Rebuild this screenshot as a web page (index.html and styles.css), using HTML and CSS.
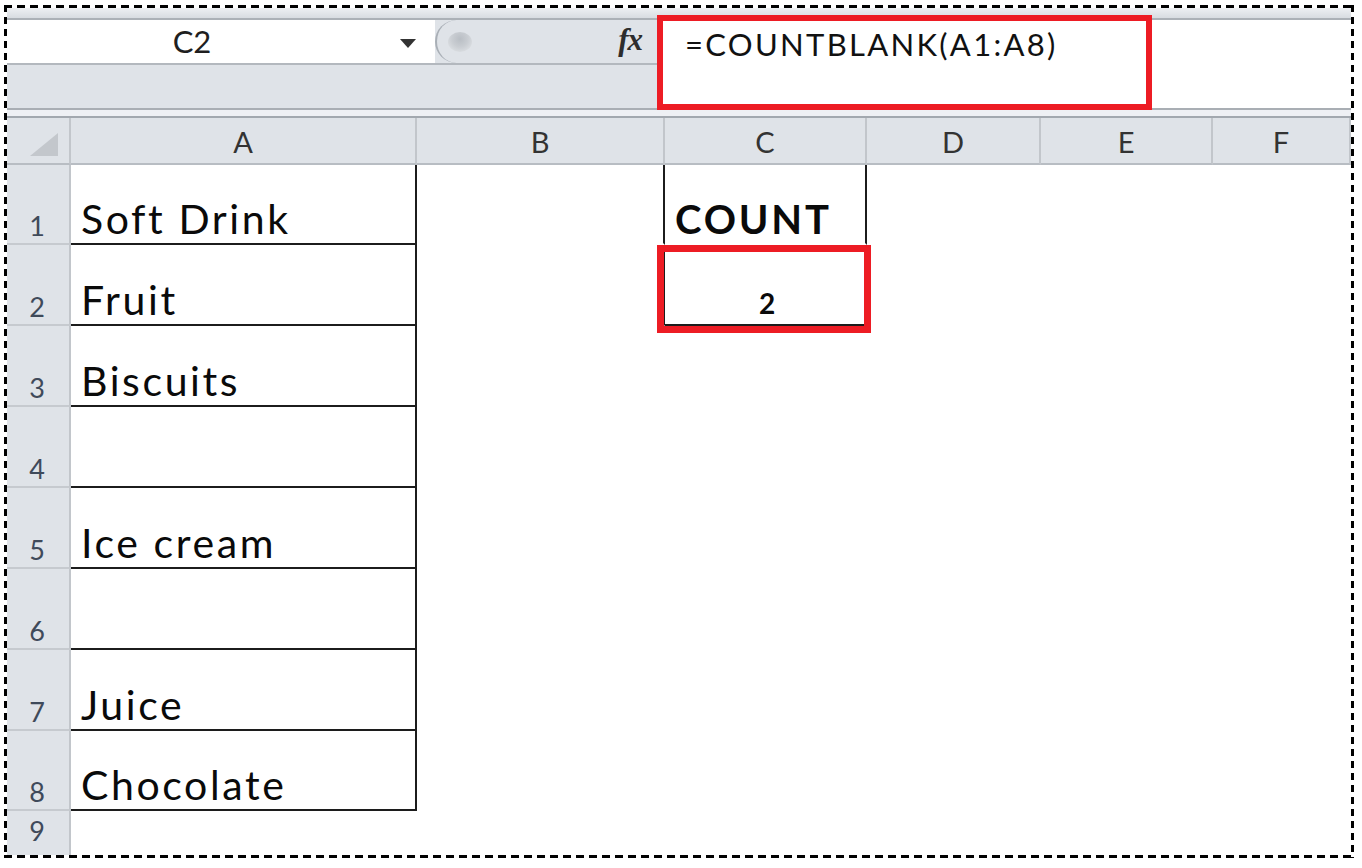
FILE: index.html
```html
<!DOCTYPE html>
<html>
<head>
<meta charset="utf-8">
<link rel="stylesheet" href="styles.css">
</head>
<body>
<div class="frame">
  <div class="toolbar">
    <div class="strip"></div>
    <div class="fbar">
      <div class="fleft">
        <div class="nrow">
          <div class="namebox">
            <span class="nametext">C2</span>
            <span class="arrow"></span>
          </div>
          <div class="pill">
            <span class="grip"></span>
            <span class="fx">fx</span>
          </div>
        </div>
        <div class="band"></div>
      </div>
      <div class="fright">
        <span class="formula">=COUNTBLANK(A1:A8)</span>
      </div>
    </div>
    <div class="sep"></div>
  </div>

  <div class="grid">
    <div class="ch corner"><span class="tri"></span></div>
    <div class="ch">A</div>
    <div class="ch">B</div>
    <div class="ch">C</div>
    <div class="ch">D</div>
    <div class="ch">E</div>
    <div class="ch">F</div>

    <div class="rh">1</div>
    <div class="c bd-r bd-b">Soft Drink</div>
    <div class="c bd-r"></div>
    <div class="c bd-r bold">COUNT</div>
    <div class="c"></div><div class="c"></div><div class="c"></div>

    <div class="rh">2</div>
    <div class="c bd-r bd-b">Fruit</div>
    <div class="c bd-r"></div>
    <div class="c bd-r bd-b num">2</div>
    <div class="c"></div><div class="c"></div><div class="c"></div>

    <div class="rh">3</div>
    <div class="c bd-r bd-b">Biscuits</div>
    <div class="c"></div><div class="c"></div><div class="c"></div><div class="c"></div><div class="c"></div>

    <div class="rh">4</div>
    <div class="c bd-r bd-b"></div>
    <div class="c"></div><div class="c"></div><div class="c"></div><div class="c"></div><div class="c"></div>

    <div class="rh">5</div>
    <div class="c bd-r bd-b">Ice cream</div>
    <div class="c"></div><div class="c"></div><div class="c"></div><div class="c"></div><div class="c"></div>

    <div class="rh">6</div>
    <div class="c bd-r bd-b"></div>
    <div class="c"></div><div class="c"></div><div class="c"></div><div class="c"></div><div class="c"></div>

    <div class="rh">7</div>
    <div class="c bd-r bd-b">Juice</div>
    <div class="c"></div><div class="c"></div><div class="c"></div><div class="c"></div><div class="c"></div>

    <div class="rh">8</div>
    <div class="c bd-r bd-b">Chocolate</div>
    <div class="c"></div><div class="c"></div><div class="c"></div><div class="c"></div><div class="c"></div>

    <div class="rh last">9</div>
    <div class="c"></div><div class="c"></div><div class="c"></div><div class="c"></div><div class="c"></div><div class="c"></div>
  </div>

  <div class="hl hl-formula"></div>
  <div class="hl hl-cell"></div>
</div>
</body>
</html>
```

FILE: styles.css
```css
html, body {
  margin: 0;
  padding: 0;
  background: #fff;
}

body {
  font-family: "Lato", "Open Sans", sans-serif;
  color: #000;
}

.frame {
  position: relative;
  box-sizing: border-box;
  margin: 5px 0 0 4px;
  width: 1350px;
  height: 853px;
  padding: 3px;
  background:
    repeating-linear-gradient(90deg, #000 0 8px, transparent 8px 13px) left top / 100% 3px no-repeat,
    repeating-linear-gradient(90deg, #000 0 8px, transparent 8px 13px) left bottom / 100% 3px no-repeat,
    repeating-linear-gradient(180deg, #000 0 7px, transparent 7px 12px) left top / 3px 100% no-repeat,
    repeating-linear-gradient(180deg, #000 0 7px, transparent 7px 12px) right top / 3px 100% no-repeat,
    #fff;
  overflow: hidden;
  display: flex;
  flex-direction: column;
}

/* ---------- formula bar ---------- */
.toolbar {
  display: flex;
  flex-direction: column;
}

.strip {
  height: 10px;
  background: linear-gradient(#eef0f3, #d8dce1);
  border-bottom: 2px solid #acb1b7;
}

.fbar {
  display: flex;
  height: 88px;
}

.fleft {
  width: 655px;
  display: flex;
  flex-direction: column;
  background: #dfe3e8;
}

.nrow {
  height: 43px;
  display: flex;
  border-bottom: 2px solid #b3b8be;
}

.namebox {
  width: 428px;
  background: #fff;
  display: flex;
  align-items: center;
}

.nametext {
  width: 370px;
  text-align: center;
  font-size: 31px;
  color: #1f1f1f;
  line-height: 1;
}

.arrow {
  margin-left: 23px;
  width: 0;
  height: 0;
  border-left: 8px solid transparent;
  border-right: 8px solid transparent;
  border-top: 9px solid #333;
  margin-top: 4px;
}

.pill {
  flex: 1;
  box-sizing: border-box;
  border-left: 2px solid #a9afb6;
  border-radius: 24px 0 0 24px;
  display: flex;
  align-items: center;
  padding-left: 11px;
}

.grip {
  width: 24px;
  height: 20px;
  border-radius: 50%;
  background: radial-gradient(circle at 50% 35%, #b9bec4 0%, #c9cdd2 45%, #e6e9ec 100%);
}

.fx {
  margin-left: auto;
  margin-right: 20px;
  font-family: "Liberation Serif", "DejaVu Serif", serif;
  font-style: italic;
  font-weight: bold;
  font-size: 31px;
  color: #2d2d2d;
  letter-spacing: -1px;
  line-height: 1;
  margin-top: -4px;
}

.band {
  flex: 1;
}

.fright {
  flex: 1;
  background: #fff;
  padding-left: 23px;
  padding-top: 9px;
}

.formula {
  font-size: 31px;
  line-height: 1;
  color: #111;
  letter-spacing: 2.3px;
}

.sep {
  height: 6px;
  background: #eef0f4;
  border-top: 2px solid #a9aeb4;
  border-bottom: 2px solid #a2a8af;
}

/* ---------- grid ---------- */
.grid {
  flex: 1;
  display: grid;
  grid-template-columns: 64px 346px 248px 202px 174px 172px 1fr;
  grid-template-rows: 47px 80px 81px 81px 81px 81px 81px 81px 80px 1fr;
}

.ch {
  background: #dfe3e8;
  border-right: 2px solid #c2c6cb;
  border-bottom: 2px solid #b8bdc3;
  display: flex;
  align-items: center;
  justify-content: center;
  font-size: 29px;
  color: #333;
  padding-top: 2px;
}

.ch:last-child { border-right: none; }

.corner {
  position: relative;
}

.tri {
  position: absolute;
  left: 23px;
  top: 15px;
  width: 0;
  height: 0;
  border-left: 28px solid transparent;
  border-bottom: 23px solid #c3c7cc;
}

.rh {
  background: #dfe3e8;
  border-right: 2px solid #c2c6cb;
  border-bottom: 2px solid #c6cacf;
  display: flex;
  align-items: flex-end;
  justify-content: center;
  font-size: 27px;
  line-height: 1.2;
  color: #3f4a5a;
  padding-right: 2px;
  padding-bottom: 1px;
}

.rh.last {
  border-bottom: none;
  align-items: center;
  padding-bottom: 4px;
}

.c {
  border-right: 2px solid transparent;
  border-bottom: 2px solid transparent;
  display: flex;
  align-items: flex-end;
  padding-left: 10px;
  font-size: 41px;
  line-height: 1.2;
  letter-spacing: 2.6px;
  color: #0a0a0a;
}

.c.bd-r { border-right-color: #1c1c1c; }
.c.bd-b { border-bottom-color: #1c1c1c; }

.c.bold {
  font-weight: bold;
  font-size: 40px;
  letter-spacing: 2.8px;
}

.c.num {
  font-weight: bold;
  font-size: 28px;
  letter-spacing: 0;
  justify-content: center;
  padding-left: 4px;
  padding-bottom: 3px;
}

/* ---------- red highlights ---------- */
.hl {
  position: absolute;
  box-sizing: border-box;
  border: 6px solid #ed1c24;
}

.hl-formula {
  left: 653px;
  top: 10px;
  width: 495px;
  height: 95px;
}

.hl-cell {
  left: 653px;
  top: 240px;
  width: 214px;
  height: 88px;
  border-width: 7px;
}
```
